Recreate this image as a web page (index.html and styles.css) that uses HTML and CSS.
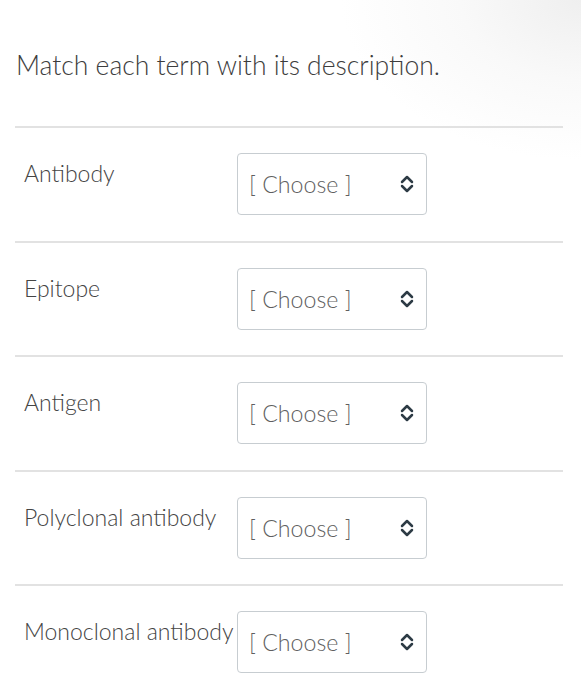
FILE: index.html
```html
<!doctype html>
<html>
<head>
<meta charset="utf-8">
<title>Matching Question</title>
<link rel="stylesheet" href="styles.css">
</head>
<body>

	<!-- question text -->
	<div class="question">
		<p class="prompt">Match each term with its description.</p>

		<div class="answers">
			<div class="answer">
				<label class="term" for="m1">Antibody</label>
				<div class="pick">
					<select id="m1" class="choose"><option>[ Choose ]</option></select>
					<svg class="chev" width="14" height="18" viewBox="0 0 14 18"><path d="M2 7l5-5 5 5M2 11l5 5 5-5" fill="none" stroke="#2d3b45" stroke-width="2.5" stroke-linecap="round" stroke-linejoin="round"/></svg>
				</div>
			</div>
			<div class="answer">
				<label class="term" for="m2">Epitope</label>
				<div class="pick">
					<select id="m2" class="choose"><option>[ Choose ]</option></select>
					<svg class="chev" width="14" height="18" viewBox="0 0 14 18"><path d="M2 7l5-5 5 5M2 11l5 5 5-5" fill="none" stroke="#2d3b45" stroke-width="2.5" stroke-linecap="round" stroke-linejoin="round"/></svg>
				</div>
			</div>
			<div class="answer">
				<label class="term" for="m3">Antigen</label>
				<div class="pick">
					<select id="m3" class="choose"><option>[ Choose ]</option></select>
					<svg class="chev" width="14" height="18" viewBox="0 0 14 18"><path d="M2 7l5-5 5 5M2 11l5 5 5-5" fill="none" stroke="#2d3b45" stroke-width="2.5" stroke-linecap="round" stroke-linejoin="round"/></svg>
				</div>
			</div>
			<div class="answer">
				<label class="term" for="m4">Polyclonal antibody</label>
				<div class="pick">
					<select id="m4" class="choose"><option>[ Choose ]</option></select>
					<svg class="chev" width="14" height="18" viewBox="0 0 14 18"><path d="M2 7l5-5 5 5M2 11l5 5 5-5" fill="none" stroke="#2d3b45" stroke-width="2.5" stroke-linecap="round" stroke-linejoin="round"/></svg>
				</div>
			</div>
			<div class="answer">
				<label class="term" for="m5">Monoclonal antibody</label>
				<div class="pick">
					<select id="m5" class="choose"><option>[ Choose ]</option></select>
					<svg class="chev" width="14" height="18" viewBox="0 0 14 18"><path d="M2 7l5-5 5 5M2 11l5 5 5-5" fill="none" stroke="#2d3b45" stroke-width="2.5" stroke-linecap="round" stroke-linejoin="round"/></svg>
				</div>
			</div>
		</div>
	</div>

</body>
</html>
```

FILE: styles.css
```css
/*Page*/
body{
	margin: 0;
	background: radial-gradient(ellipse 240px 160px at 100% 0%, #efefef 0%, #f9f9f9 50%, #fff 100%);
	font-family: Lato, "Open Sans", sans-serif;
	font-weight: 300;
	color: #444;
	height: 700px;
	overflow: hidden;
}

.question{
	padding: 0 18px 0 15px;
}

.prompt{
	margin: 0;
	padding: 48px 0 0 1px;
	height: 78px;
	font-size: 26.5px;
	line-height: 35px;
	color: #3d3d3d;
}

/*Rows*/
.answer{
	display: flex;
	align-items: flex-start;
	border-top: 2px solid #e2e2e2;
	padding: 25px 0 25px 9px;
	height: 62.5px;
}

.term{
	min-width: 213px;
	font-size: 23px;
	line-height: 28px;
	padding-top: 6px;
	white-space: nowrap;
}

/*Select box*/
.pick{
	position: relative;
	width: 190px;
	height: 62px;
}

.choose{
	-webkit-appearance: none;
	appearance: none;
	width: 190px;
	height: 62px;
	margin: 0;
	padding: 0 0 0 11px;
	border: 1px solid #c7cdd1;
	border-radius: 4px;
	background: #fff;
	font-family: Lato, "Open Sans", sans-serif;
	font-weight: 300;
	font-size: 23.2px;
	color: #5f5f5f;
}

.chev{
	position: absolute;
	right: 13px;
	top: 22px;
	pointer-events: none;
}
```
